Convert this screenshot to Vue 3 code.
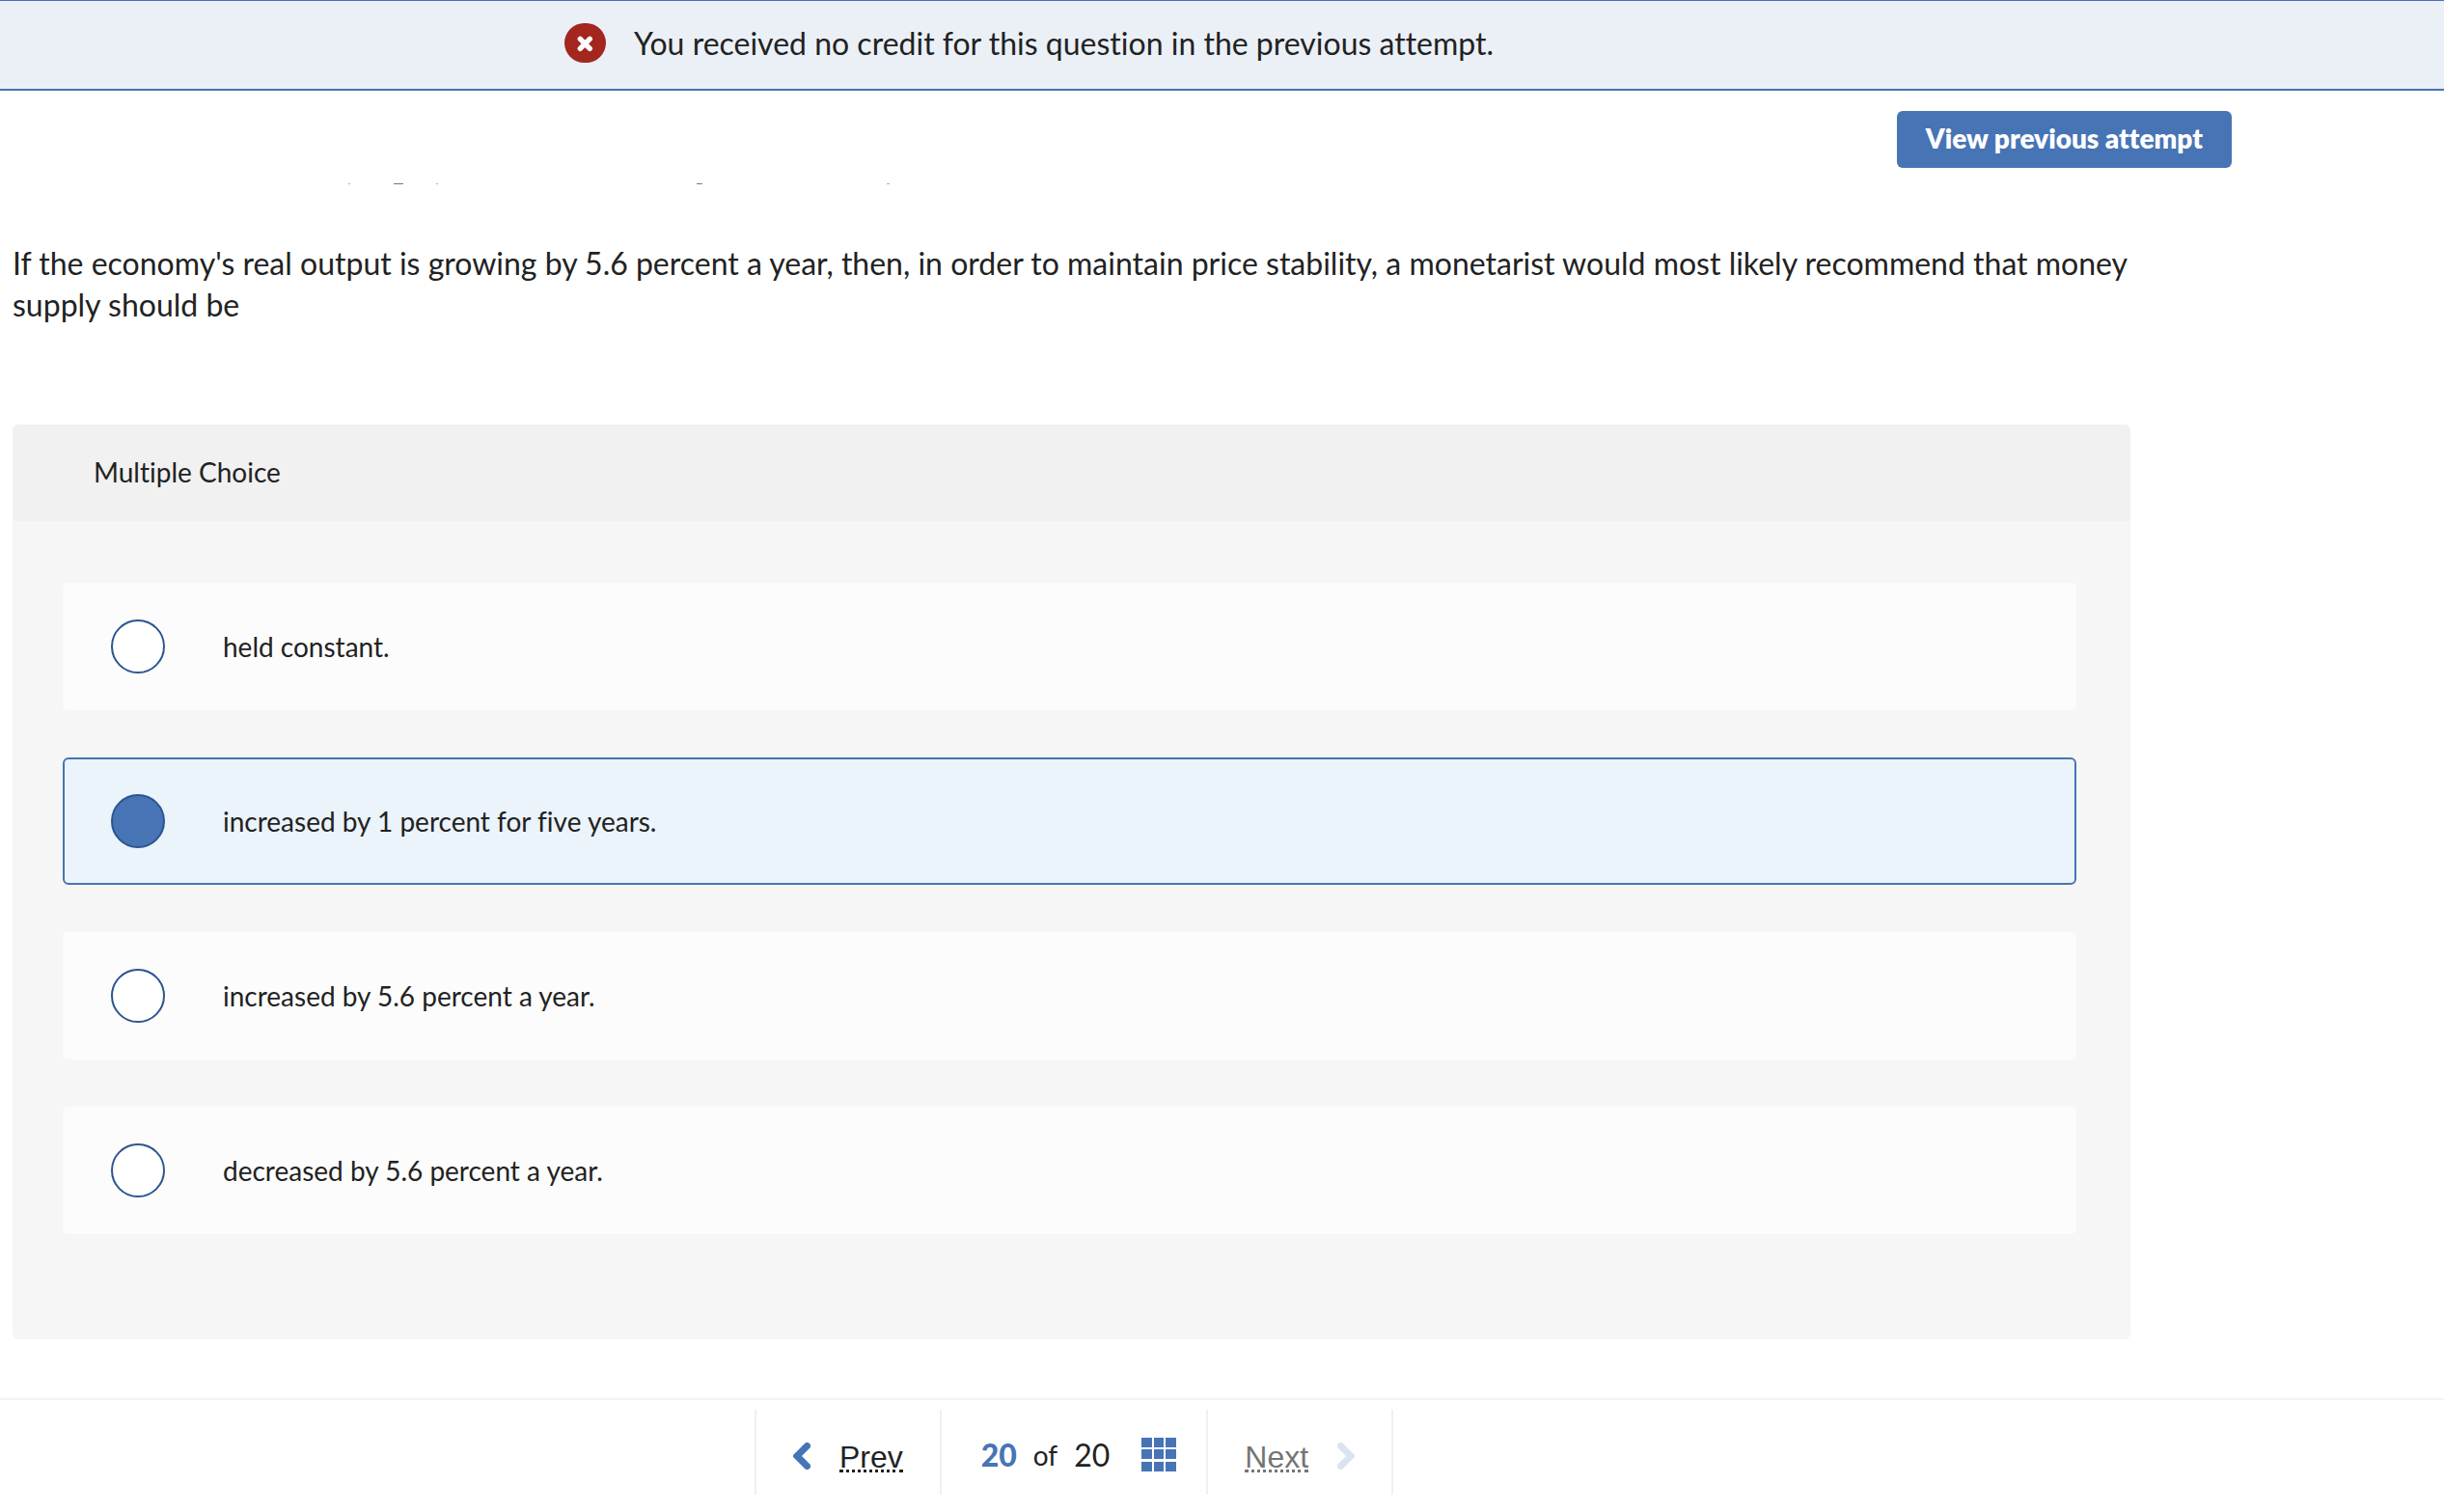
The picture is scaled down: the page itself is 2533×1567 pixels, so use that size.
<template>
  <div class="quiz-page">
    <!-- Result banner -->
    <div class="banner" role="status">
      <svg class="banner-icon" viewBox="0 0 43 41" aria-hidden="true">
        <rect width="43" height="41" rx="20.5" fill="#a3261f" />
        <path d="M16.3 16.3l10 10M26.3 16.3l-10 10" stroke="#fff" stroke-width="5.4" stroke-linecap="round" />
      </svg>
      <p class="banner-text">You received no credit for this question in the previous attempt.</p>
    </div>

    <div class="toolbar">
      <button type="button" class="attempt-btn">View previous attempt</button>
    </div>

    <main class="question">
      <!-- Bottom edge of the line scrolled out of view -->
      <svg class="scrolled-line" width="600" height="1" viewBox="0 0 600 1" aria-hidden="true">
        <path d="M8 .5h2M99 .5h2M566 .5h3" stroke="#b0b0b0" />
        <path d="M55 .5h10M369 .5h6" stroke="#777" />
      </svg>

      <p class="question-text">If the economy's real output is growing by 5.6 percent a year, then, in order to maintain price stability, a monetarist would most likely recommend that money supply should be</p>

      <section class="choice-panel">
        <h2 id="choice-title" class="choice-title">Multiple Choice</h2>
        <div class="choice-list" role="radiogroup" aria-labelledby="choice-title">
          <label
            v-for="option in options"
            :key="option.id"
            class="choice"
            :class="{ selected: selected === option.id }"
          >
            <input type="radio" name="answer" class="choice-radio" :value="option.id" v-model="selected" />
            <span>{{ option.text }}</span>
          </label>
        </div>
      </section>
    </main>

    <!-- Question navigation -->
    <footer class="footer">
      <nav class="pager">
        <a href="#prev" class="pager-cell">
          <svg class="chevron" viewBox="0 0 18 28" aria-hidden="true">
            <path d="M14.5 3.5L4 14l10.5 10.5" />
          </svg>
          <span class="pager-label">Prev</span>
        </a>
        <div class="pager-cell position">
          <strong class="current">{{ current }}</strong>
          <span class="of">of</span>
          <span>{{ total }}</span>
          <button type="button" class="grid-btn" aria-label="All questions">
            <svg class="grid-icon" viewBox="0 0 36 35" aria-hidden="true">
              <path d="M0 0h11v10H0zM13 0h10v10H13zM25 0h11v10H25zM0 12h11v10H0zM13 12h10v10H13zM25 12h11v10H25zM0 25h11v10H0zM13 25h10v10H13zM25 25h11v10H25z" />
            </svg>
          </button>
        </div>
        <a href="#next" class="pager-cell disabled" aria-disabled="true">
          <span class="pager-label">Next</span>
          <svg class="chevron" viewBox="0 0 18 28" aria-hidden="true">
            <path d="M3.5 3.5L14 14 3.5 24.5" />
          </svg>
        </a>
      </nav>
    </footer>
  </div>
</template>

<script setup>
import { ref } from 'vue'

const options = [
  { id: 1, text: 'held constant.' },
  { id: 2, text: 'increased by 1 percent for five years.' },
  { id: 3, text: 'increased by 5.6 percent a year.' },
  { id: 4, text: 'decreased by 5.6 percent a year.' }
]

const selected = ref(2)
const current = ref(20)
const total = 20
</script>

<style>
body {
  margin: 0;
  background-color: #fff;
}
</style>

<style scoped>
* {
  margin: 0;
  padding: 0;
  box-sizing: border-box;
}

.quiz-page {
  font-family: Lato, 'Liberation Sans', sans-serif;
  font-size: 28px;
  font-variant-ligatures: none;
  color: #222;
}

/* Banner */
.banner {
  display: flex;
  align-items: flex-start;
  gap: 29px;
  padding: 23px 24px 27px 585px;
  background-color: #ebf0f7;
  border-top: 1px solid #4774b5;
  border-bottom: 2px solid #4774b5;
}

.banner-icon {
  width: 43px;
  height: 41px;
  flex-shrink: 0;
  fill: none;
}

.banner-text {
  font-size: 32px;
  line-height: 41px;
}

/* Toolbar */
.toolbar {
  display: flex;
  justify-content: flex-end;
  padding: 21px 220px 16px 13px;
}

.attempt-btn {
  height: 59px;
  padding: 0 30px 4px;
  border: none;
  border-radius: 6px;
  background-color: #4774b5;
  color: #fff;
  font-family: inherit;
  font-size: 28px;
  font-weight: 800;
  font-variant-ligatures: none;
  cursor: pointer;
}

/* Question */
.question {
  padding: 0 325px 61px 13px;
}

.scrolled-line {
  display: block;
  margin-left: 340px;
}

.question-text {
  padding: 60px 0 103px;
  font-size: 32px;
  line-height: 43px;
}

.choice-panel {
  border-radius: 6px;
  background-color: #f6f6f6;
  overflow: hidden;
}

.choice-title {
  padding: 0 84px 2px;
  background-color: #f1f1f1;
  font-size: 28px;
  font-weight: 400;
  line-height: 98px;
}

.choice-list {
  display: flex;
  flex-direction: column;
  gap: 49px;
  padding: 64px 56px 109px 52px;
}

.choice {
  display: flex;
  align-items: center;
  gap: 60px;
  height: 132px;
  padding: 0 48px;
  border: 2px solid transparent;
  border-radius: 6px;
  background-color: #fcfcfc;
  cursor: pointer;
}

.choice.selected {
  border-color: #4774b5;
  background-color: #ebf3fb;
}

.choice-radio {
  appearance: none;
  width: 56px;
  height: 56px;
  flex-shrink: 0;
  border: 2px solid #2b558f;
  border-radius: 50%;
  background-color: #fff;
}

.choice-radio:checked {
  background-color: #4774b5;
}

/* Footer */
.footer {
  display: flex;
  justify-content: center;
  padding: 10px 307px 18px 0;
  border-top: 2px solid #f3f3f3;
}

.pager {
  display: flex;
  border-left: 2px solid #f0f0f0;
}

.pager-cell {
  display: flex;
  align-items: center;
  height: 88px;
  gap: 30px;
  padding: 8px 38px 0;
  border-right: 2px solid #f0f0f0;
  color: #222;
  text-decoration: none;
}

.pager-label {
  padding-top: 4px;
  border-bottom: 3px dotted #222;
  font-family: 'Liberation Sans', Arial, sans-serif;
  font-size: 32px;
  line-height: 26px;
}

.chevron {
  width: 18px;
  height: 28px;
  fill: none;
  stroke: #4774b5;
  stroke-width: 7px;
  stroke-linecap: round;
}

.position {
  gap: 17px;
  padding: 5px 31px 0 41px;
  font-size: 32px;
}

.current {
  color: #4774b5;
  font-weight: 900;
}

.of {
  font-size: 28px;
}

.grid-btn {
  display: flex;
  margin-left: 16px;
  border: none;
  background: none;
  cursor: pointer;
}

.grid-icon {
  width: 36px;
  height: 35px;
  fill: #4774b5;
}

.disabled {
  color: #757575;
  cursor: default;
}

.disabled .pager-label {
  border-color: #757575;
}

.disabled .chevron {
  stroke: #dae3f0;
}
</style>
